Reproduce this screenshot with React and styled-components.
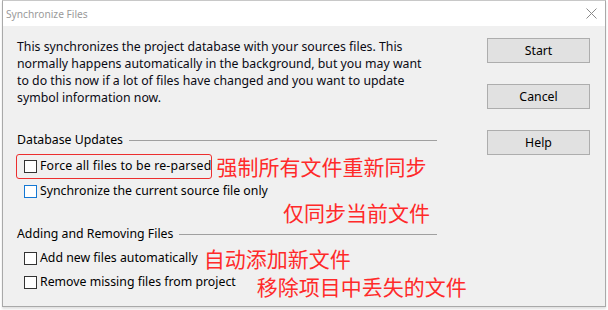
import React from 'react';
import styled, { createGlobalStyle } from 'styled-components';

const GlobalStyle = createGlobalStyle`
  html, body {
    margin: 0;
    padding: 0;
    background: #ffffff;
  }
  body {
    font-family: "Noto Sans", "Noto Sans CJK SC", sans-serif;
  }
`

const Screen = styled.div`
  width: 608px;
  height: 310px;
  overflow: hidden;
  background: #ffffff;
`

const Window = styled.div`
  margin-left: 2px;
  width: 604px;
  height: 307px;
  box-sizing: border-box;
  border: 1px solid #a9a9a9;
  border-top-color: #c8c8c8;
  background: #f0f0f0;
  box-shadow: 0 2px 2px rgba(0, 0, 0, 0.12);
  display: flex;
  flex-direction: column;
`

const TitleBar = styled.div`
  height: 25px;
  background: #ffffff;
  display: flex;
  align-items: center;
  justify-content: space-between;
  padding: 0 8px 0 3px;
  font-size: 10.2px;
  color: #9a9a9a;
`

const Body = styled.div`
  flex: 1;
  display: flex;
  padding: 12px 0 0 14px;
  gap: 50px;
`

const LeftCol = styled.div`
  width: 420px;
  display: flex;
  flex-direction: column;
`

const Description = styled.p`
  margin: 0;
  font-size: 12.3px;
  line-height: 17px;
  color: #0a0a14;
  white-space: nowrap;
`

const GroupHeader = styled.div`
  display: flex;
  align-items: center;
  gap: 6px;
  margin-top: ${(p) => p.$top}px;
  font-size: 12.3px;
  line-height: 16px;
  color: #000;

  &::after {
    content: '';
    flex: 1;
    height: 1px;
    background: #a0a0a0;
  }
`

const Row = styled.div`
  display: flex;
  align-items: ${(p) => (p.$top ? 'flex-start' : 'center')};
  margin-top: ${(p) => p.$gap}px;
`

const Choice = styled.label`
  display: flex;
  align-items: center;
  gap: 3px;
  padding-left: ${(p) => p.$indent || 0}px;
  font-size: 12.3px;
  line-height: 16px;
  color: #000;
  white-space: nowrap;
`

const Outlined = styled.div`
  display: flex;
  align-items: center;
  height: 23px;
  padding: 0 0 0 7px;
  border: 1px solid #ec2f2f;
  border-radius: 3px;
  margin-left: -1px;

  ${Choice} {
    letter-spacing: 0.17px;
  }
`

const Box = styled.span`
  width: 13px;
  height: 13px;
  box-sizing: border-box;
  background: #ffffff;
  border: 1px solid ${(p) => (p.$focus ? '#1478d4' : '#333333')};
`

const Note = styled.span`
  flex: none;
  font-family: "Noto Sans CJK SC", sans-serif;
  font-size: 21px;
  line-height: 26px;
  color: #ff2a2a;
  white-space: nowrap;
  margin-left: ${(p) => p.$left}px;
  margin-top: ${(p) => p.$top || 0}px;
`

const ButtonCol = styled.div`
  display: flex;
  flex-direction: column;
  gap: 21px;
`

const Button = styled.button`
  width: 103px;
  height: 25px;
  box-sizing: border-box;
  background: #e1e1e1;
  border: 1px solid #adadad;
  font-family: "Noto Sans", sans-serif;
  font-size: 12.3px;
  color: #000;
  padding: 0;
`

function CloseIcon() {
  return (
    <svg width="11" height="11" viewBox="0 0 11 11">
      <path d="M0.5 0.5 L10.5 10.5 M10.5 0.5 L0.5 10.5" stroke="#8a8a8a" strokeWidth="1" />
    </svg>
  )
}

export default function App() {
  return (
    <Screen>
      <GlobalStyle />
      <Window>
        <TitleBar>
          <span>Synchronize Files</span>
          <CloseIcon />
        </TitleBar>
        <Body>
          <LeftCol>
            <Description>
              This synchronizes the project database with your sources files. This<br />
              normally happens automatically in the background, but you may want<br />
              to do this now if a lot of files have changed and you want to update<br />
              symbol information now.
            </Description>

            <GroupHeader $top={26}>Database Updates</GroupHeader>
            <Row $gap={5}>
              <Outlined>
                <Choice>
                  <Box />
                  Force all files to be re-parsed
                </Choice>
              </Outlined>
              <Note $left={4}>强制所有文件重新同步</Note>
            </Row>
            <Row $gap={4}>
              <Choice $indent={7}>
                <Box $focus />
                Synchronize the current source file only
              </Choice>
            </Row>
            <Row $gap={0}>
              <Note $left={266}>仅同步当前文件</Note>
            </Row>

            <GroupHeader $top={1}>Adding and Removing Files</GroupHeader>
            <Row $gap={3}>
              <Choice $indent={7}>
                <Box />
                Add new files automatically
              </Choice>
              <Note $left={6}>自动添加新文件</Note>
            </Row>
            <Row $gap={3} $top>
              <Choice $indent={7}>
                <Box />
                Remove missing files from project
              </Choice>
              <Note $left={21} $top={-1}>移除项目中丢失的文件</Note>
            </Row>
          </LeftCol>

          <ButtonCol>
            <Button>Start</Button>
            <Button>Cancel</Button>
            <Button>Help</Button>
          </ButtonCol>
        </Body>
      </Window>
    </Screen>
  )
}
